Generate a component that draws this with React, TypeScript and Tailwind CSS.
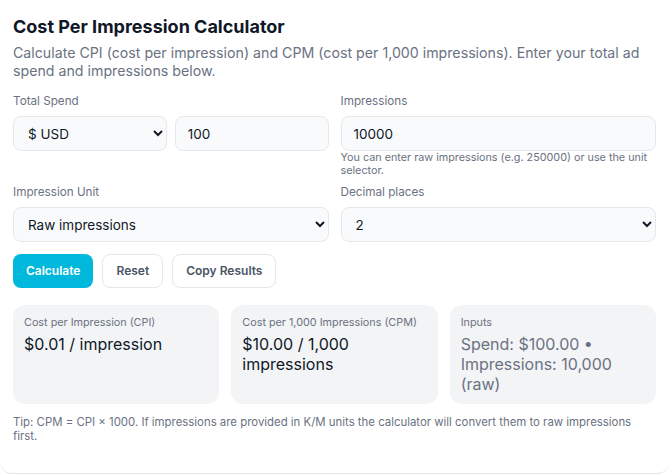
import { useState } from "react";

const fieldClass =
  "h-[35px] w-full rounded-lg border border-gray-200 bg-gray-50 px-3 text-[13.5px] text-gray-900 outline-none";
const selectClass =
  "h-[35px] w-full rounded-lg border border-gray-200 bg-gray-50 pl-[10px] pr-2 text-[13.5px] text-gray-900 outline-none";

const App = () => {
  const [currency, setCurrency] = useState("USD");
  const [spend, setSpend] = useState("100");
  const [impressions, setImpressions] = useState("10000");
  const [unit, setUnit] = useState("raw");
  const [decimals, setDecimals] = useState("2");

  return (
    <div
      className="min-h-[475px] bg-white"
      style={{ fontFamily: "Inter, 'Noto Sans', sans-serif" }}
    >
      <div className="min-h-[474px] rounded-b-xl border-b border-gray-200 px-[13px] pt-[13px] pb-[24px]">
        {/* Header */}
        <h1 className="text-[18px] font-bold leading-[28px] text-gray-900">Cost Per Impression Calculator</h1>
        <p className="mt-[3px] text-[14.2px] leading-[18px] text-gray-500">
          Calculate CPI (cost per impression) and CPM (cost per 1,000 impressions). Enter your total ad spend and
          impressions below.
        </p>

        {/* Inputs */}
        <div className="mt-[13px] grid grid-cols-2 gap-x-3 gap-y-[7px]">
          <div>
            <label className="block text-[11.7px] leading-4 text-gray-500">Total Spend</label>
            <div className="mt-[7px] grid grid-cols-2 gap-2">
              <select className={selectClass} value={currency} onChange={(e) => setCurrency(e.target.value)}>
                <option value="USD">$ USD</option>
                <option value="EUR">€ EUR</option>
                <option value="GBP">£ GBP</option>
              </select>
              <input className={fieldClass} value={spend} onChange={(e) => setSpend(e.target.value)} />
            </div>
          </div>
          <div>
            <label className="block text-[11.7px] leading-4 text-gray-500">Impressions</label>
            <input
              className={`${fieldClass} mt-[7px]`}
              value={impressions}
              onChange={(e) => setImpressions(e.target.value)}
            />
            <p className="text-[10.8px] leading-[13px] text-gray-500">
              You can enter raw impressions (e.g. 250000) or use the unit selector.
            </p>
          </div>
          <div>
            <label className="block text-[11.7px] leading-4 text-gray-500">Impression Unit</label>
            <select className={`${selectClass} mt-[7px]`} value={unit} onChange={(e) => setUnit(e.target.value)}>
              <option value="raw">Raw impressions</option>
              <option value="k">Thousands (K)</option>
              <option value="m">Millions (M)</option>
            </select>
          </div>
          <div>
            <label className="block text-[11.7px] leading-4 text-gray-500">Decimal places</label>
            <select
              className={`${selectClass} mt-[7px]`}
              value={decimals}
              onChange={(e) => setDecimals(e.target.value)}
            >
              <option value="0">0</option>
              <option value="1">1</option>
              <option value="2">2</option>
              <option value="3">3</option>
              <option value="4">4</option>
            </select>
          </div>
        </div>

        {/* Actions */}
        <div className="mt-3 flex gap-[9px]">
          <button className="h-[34px] rounded-lg bg-cyan-500 px-[13px] text-[12px] font-semibold text-white">
            Calculate
          </button>
          <button className="h-[34px] rounded-lg border border-gray-200 bg-white px-[13px] text-[12px] font-semibold text-gray-600">
            Reset
          </button>
          <button className="h-[34px] rounded-lg border border-gray-200 bg-white px-[13px] text-[12px] font-semibold text-gray-600">
            Copy Results
          </button>
        </div>

        {/* Results */}
        <div className="mt-[17px] grid grid-cols-3 gap-3">
          <div className="rounded-xl bg-gray-100 px-[11px] pt-[11px] pb-[10px]">
            <div className="text-[10.8px] leading-[14px] text-gray-500">Cost per Impression (CPI)</div>
            <div className="mt-1 text-[16px] leading-5 text-gray-900">$0.01 / impression</div>
          </div>
          <div className="rounded-xl bg-gray-100 px-[11px] pt-[11px] pb-[10px]">
            <div className="text-[10.8px] leading-[14px] text-gray-500">Cost per 1,000 Impressions (CPM)</div>
            <div className="mt-1 text-[16px] leading-5 text-gray-900">$10.00 / 1,000 impressions</div>
          </div>
          <div className="rounded-xl bg-gray-100 px-[11px] pt-[11px] pb-[10px]">
            <div className="text-[10.8px] leading-[14px] text-gray-500">Inputs</div>
            <div className="mt-1 text-[16px] leading-5 text-gray-500">
              Spend: $100.00 • Impressions: 10,000 (raw)
            </div>
          </div>
        </div>

        <p className="mt-[11px] text-[11.4px] leading-[14px] text-gray-500">
          Tip: CPM = CPI × 1000. If impressions are provided in K/M units the calculator will convert them to raw
          impressions first.
        </p>
      </div>
    </div>
  );
};

export default App;
